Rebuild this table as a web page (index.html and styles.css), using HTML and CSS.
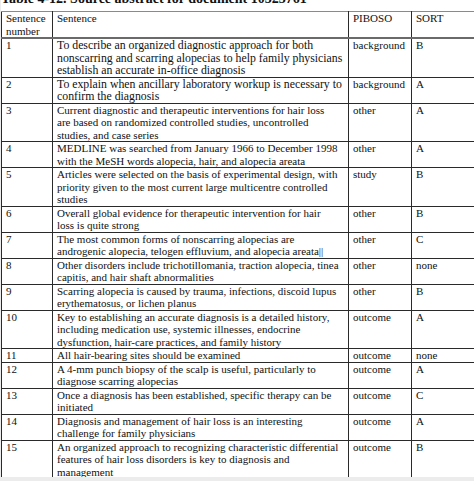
FILE: index.html
```html
<!DOCTYPE html>
<html>
<head>
<meta charset="utf-8">
<link rel="stylesheet" href="styles.css">
</head>
<body>
<div class="sheet">
  <div class="title">Table 4-12. Source abstract for document 10523761</div>
  <table class="grid">
    <colgroup>
      <col class="c-num"><col class="c-sent"><col class="c-pib"><col class="c-sort">
    </colgroup>
    <thead>
      <tr><th>Sentence<br>number</th><th>Sentence</th><th>PIBOSO</th><th>SORT</th></tr>
    </thead>
    <tbody>
      <tr><td>1</td><td class="wide">To describe an organized diagnostic approach for both<br>nonscarring and scarring alopecias to help family physicians<br>establish an accurate in-office diagnosis</td><td>background</td><td>B</td></tr>
      <tr><td>2</td><td class="wide">To explain when ancillary laboratory workup is necessary to<br>confirm the diagnosis</td><td>background</td><td>A</td></tr>
      <tr><td>3</td><td>Current diagnostic and therapeutic interventions for hair loss<br>are based on randomized controlled studies, uncontrolled<br>studies, and case series</td><td>other</td><td>A</td></tr>
      <tr><td>4</td><td>MEDLINE was searched from January 1966 to December 1998<br>with the MeSH words alopecia, hair, and alopecia areata</td><td>other</td><td>A</td></tr>
      <tr><td>5</td><td>Articles were selected on the basis of experimental design, with<br>priority given to the most current large multicentre controlled<br>studies</td><td>study</td><td>B</td></tr>
      <tr><td>6</td><td>Overall global evidence for therapeutic intervention for hair<br>loss is quite strong</td><td>other</td><td>B</td></tr>
      <tr><td>7</td><td>The most common forms of nonscarring alopecias are<br>androgenic alopecia, telogen effluvium, and alopecia areata||</td><td>other</td><td>C</td></tr>
      <tr><td>8</td><td>Other disorders include trichotillomania, traction alopecia, tinea<br>capitis, and hair shaft abnormalities</td><td>other</td><td>none</td></tr>
      <tr><td>9</td><td>Scarring alopecia is caused by trauma, infections, discoid lupus<br>erythematosus, or lichen planus</td><td>other</td><td>B</td></tr>
      <tr><td>10</td><td>Key to establishing an accurate diagnosis is a detailed history,<br>including medication use, systemic illnesses, endocrine<br>dysfunction, hair-care practices, and family history</td><td>outcome</td><td>A</td></tr>
      <tr><td>11</td><td>All hair-bearing sites should be examined</td><td>outcome</td><td>none</td></tr>
      <tr><td>12</td><td>A 4-mm punch biopsy of the scalp is useful, particularly to<br>diagnose scarring alopecias</td><td>outcome</td><td>A</td></tr>
      <tr><td>13</td><td>Once a diagnosis has been established, specific therapy can be<br>initiated</td><td>outcome</td><td>C</td></tr>
      <tr><td>14</td><td>Diagnosis and management of hair loss is an interesting<br>challenge for family physicians</td><td>outcome</td><td>A</td></tr>
      <tr><td>15</td><td>An organized approach to recognizing characteristic differential<br>features of hair loss disorders is key to diagnosis and<br>management</td><td>outcome</td><td>B</td></tr>
    </tbody>
  </table>
</div>
</body>
</html>
```
FILE: styles.css
```css
html, body {
  margin: 0;
  padding: 0;
  background: #ececec;
  overflow: hidden;
  width: 474px;
  height: 481px;
}
.sheet {
  background: #ffffff;
  width: 474px;
  height: 477px;
  margin-left: 1px;
  overflow: hidden;
  font-family: "Liberation Serif", "Times New Roman", serif;
  color: #111111;
}
.title {
  font-weight: bold;
  font-size: 14px;
  line-height: 15px;
  margin-top: -9px;
  height: 20px;
  white-space: nowrap;
}
.grid {
  border-collapse: collapse;
  table-layout: fixed;
  width: 520px;
  font-size: 11px;
  line-height: 12.5px;
}
.c-num { width: 51px; }
.c-sent { width: 296px; }
.c-pib { width: 63px; }
.c-sort { width: 110px; }
.grid th, .grid td {
  border: 1px solid #2a2a2a;
  padding: 0 4px;
  vertical-align: top;
  text-align: left;
  font-weight: normal;
  white-space: nowrap;
}
.grid td.wide {
  font-size: 11.8px;
}
.grid thead th {
  border-top-color: #8a8a8a;
  border-bottom: 2px solid #6a6a6a;
}
```
